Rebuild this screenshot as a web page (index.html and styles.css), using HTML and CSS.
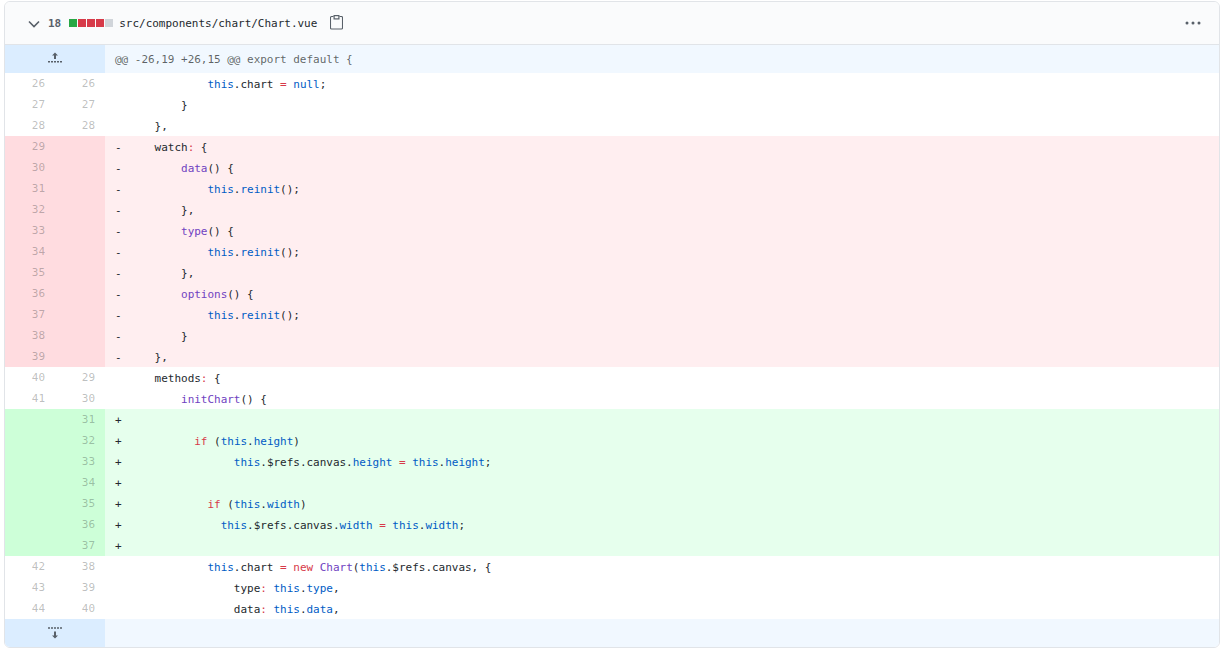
FILE: index.html
```html
<!DOCTYPE html>
<html>
<head>
  <title>Chart.vue diff</title>
  <link rel="stylesheet" href="styles.css">
</head>
<body>
  <div class="file">
    <div class="file-header">
      <svg class="chevron" width="12" height="8" viewBox="0 0 12 8"><path d="M1 1.500l5 5 5-5" fill="none" stroke="#586069" stroke-width="1.600"/></svg>
      <span class="count">18</span>
      <span class="diffstat"><i class="add"></i><i class="del"></i><i class="del"></i><i class="del"></i><i class="neutral"></i></span>
      <span class="file-name">src/components/chart/Chart.vue</span>
      <svg class="clip" width="13" height="15" viewBox="0 0 13 15"><path d="M3.500 1.500H1.500a1 1 0 0 0-1 1v10.500a1 1 0 0 0 1 1h10a1 1 0 0 0 1-1V2.500a1 1 0 0 0-1-1H9.500" fill="none" stroke="#586069" stroke-width="1.100"/><rect x="3.500" y="0" width="6" height="4.500" fill="#586069"/><rect x="4.700" y="1.200" width="3.600" height="2.100" fill="#fafbfc"/></svg>
      <svg class="more" width="16" height="4" viewBox="0 0 16 4"><circle cx="2" cy="2" r="1.500" fill="#586069"/><circle cx="8" cy="2" r="1.500" fill="#586069"/><circle cx="14" cy="2" r="1.500" fill="#586069"/></svg>
    </div>

    <div class="row hunk">
      <div class="expand"><svg width="14" height="14" viewBox="0 0 14 14"><path d="M7 0.500l3 3H8v3.500H6V3.500H4z" fill="#586069"/><path d="M0 9.750h2M3 9.750h2M6 9.750h2M9 9.750h2M12 9.750h2" stroke="#586069" stroke-width="1.500"/></svg></div>
      <div class="code hunk-text">@@ -26,19 +26,15 @@ export default {</div>
    </div>

    <div class="row"><span class="num">26</span><span class="num">26</span><div class="code">              <b class="k">this</b>.chart <b class="o">=</b> <b class="k">null</b>;</div></div>
    <div class="row"><span class="num">27</span><span class="num">27</span><div class="code">          }</div></div>
    <div class="row"><span class="num">28</span><span class="num">28</span><div class="code">      },</div></div>

    <div class="row deleted"><span class="num">29</span><span class="num"></span><div class="code">-     watch<b class="o">:</b> {</div></div>
    <div class="row deleted"><span class="num">30</span><span class="num"></span><div class="code">-         <b class="f">data</b>() {</div></div>
    <div class="row deleted"><span class="num">31</span><span class="num"></span><div class="code">-             <b class="k">this</b>.<b class="k">reinit</b>();</div></div>
    <div class="row deleted"><span class="num">32</span><span class="num"></span><div class="code">-         },</div></div>
    <div class="row deleted"><span class="num">33</span><span class="num"></span><div class="code">-         <b class="f">type</b>() {</div></div>
    <div class="row deleted"><span class="num">34</span><span class="num"></span><div class="code">-             <b class="k">this</b>.<b class="k">reinit</b>();</div></div>
    <div class="row deleted"><span class="num">35</span><span class="num"></span><div class="code">-         },</div></div>
    <div class="row deleted"><span class="num">36</span><span class="num"></span><div class="code">-         <b class="f">options</b>() {</div></div>
    <div class="row deleted"><span class="num">37</span><span class="num"></span><div class="code">-             <b class="k">this</b>.<b class="k">reinit</b>();</div></div>
    <div class="row deleted"><span class="num">38</span><span class="num"></span><div class="code">-         }</div></div>
    <div class="row deleted"><span class="num">39</span><span class="num"></span><div class="code">-     },</div></div>

    <div class="row"><span class="num">40</span><span class="num">29</span><div class="code">      methods<b class="o">:</b> {</div></div>
    <div class="row"><span class="num">41</span><span class="num">30</span><div class="code">          <b class="f">initChart</b>() {</div></div>

    <div class="row added"><span class="num"></span><span class="num">31</span><div class="code">+</div></div>
    <div class="row added"><span class="num"></span><span class="num">32</span><div class="code">+           <b class="o">if</b> (<b class="k">this</b>.<b class="k">height</b>)</div></div>
    <div class="row added"><span class="num"></span><span class="num">33</span><div class="code">+                 <b class="k">this</b>.$refs.canvas.<b class="k">height</b> <b class="o">=</b> <b class="k">this</b>.<b class="k">height</b>;</div></div>
    <div class="row added"><span class="num"></span><span class="num">34</span><div class="code">+</div></div>
    <div class="row added"><span class="num"></span><span class="num">35</span><div class="code">+             <b class="o">if</b> (<b class="k">this</b>.<b class="k">width</b>)</div></div>
    <div class="row added"><span class="num"></span><span class="num">36</span><div class="code">+               <b class="k">this</b>.$refs.canvas.<b class="k">width</b> <b class="o">=</b> <b class="k">this</b>.<b class="k">width</b>;</div></div>
    <div class="row added"><span class="num"></span><span class="num">37</span><div class="code">+</div></div>

    <div class="row"><span class="num">42</span><span class="num">38</span><div class="code">              <b class="k">this</b>.chart <b class="o">=</b> <b class="o">new</b> <b class="f">Chart</b>(<b class="k">this</b>.$refs.canvas, {</div></div>
    <div class="row"><span class="num">43</span><span class="num">39</span><div class="code">                  type<b class="o">:</b> <b class="k">this</b>.<b class="k">type</b>,</div></div>
    <div class="row"><span class="num">44</span><span class="num">40</span><div class="code">                  data<b class="o">:</b> <b class="k">this</b>.<b class="k">data</b>,</div></div>

    <div class="row hunk">
      <div class="expand"><svg width="14" height="14" viewBox="0 0 14 14"><path d="M0 2h2M3 2h2M6 2h2M9 2h2M12 2h2" stroke="#586069" stroke-width="1.500"/><path d="M7 12.500l-3-3h2V5.500h2v4h2z" fill="#586069"/></svg></div>
      <div class="code"></div>
    </div>
  </div>
</body>
</html>
```

FILE: styles.css
```css
html, body {
  margin: 0;
  background: #fff;
}

body {
  padding: 1px 4px 0 4px;
  font-family: "DejaVu Sans Mono", monospace;
  font-size: 11px;
  letter-spacing: -0.02px;
  color: #24292e;
}

.file {
  border: 1px solid #e1e4e8;
  border-radius: 6px;
  overflow: hidden;
}

.file-header {
  display: flex;
  align-items: center;
  height: 42px;
  padding-left: 23px;
  padding-right: 18px;
  background: #fafbfc;
  border-bottom: 1px solid #e1e4e8;
}

.chevron {
  margin-right: 8px;
  margin-top: 2px;
}

.count {
  font-weight: 600;
  color: #586069;
  margin-right: 8px;
}

.diffstat {
  display: flex;
  gap: 1px;
  margin-right: 6px;
}

.diffstat i {
  width: 8px;
  height: 8px;
}

.diffstat .add { background: #28a745; }
.diffstat .del { background: #d73a49; }
.diffstat .neutral { background: #d1d5da; }

.file-name {
  color: #24292e;
}

.clip {
  margin-left: 13px;
  margin-bottom: 2px;
}

.more {
  margin-left: auto;
}

.row {
  display: flex;
  height: 21px;
  line-height: 21px;
  background: #fff;
}

.num {
  width: 50px;
  box-sizing: border-box;
  padding-right: 10px;
  text-align: right;
  color: rgba(27, 31, 35, 0.3);
  flex: none;
}

.code {
  flex: 1;
  padding-left: 10px;
  padding-top: 1px;
  white-space: pre;
}

.code b {
  font-weight: normal;
}

.k { color: #005cc5; }
.f { color: #6f42c1; }
.o { color: #d73a49; }

.deleted { background: #ffeef0; }
.deleted .num { background: #ffdce0; }

.added { background: #e6ffed; }
.added .num { background: #cdffd8; }

.hunk {
  height: 28px;
  line-height: 28px;
  background: #f1f8ff;
}

.expand {
  width: 100px;
  flex: none;
  background: #dbedff;
  display: flex;
  align-items: center;
  justify-content: center;
}

.hunk-text {
  color: rgba(27, 31, 35, 0.7);
}
```
